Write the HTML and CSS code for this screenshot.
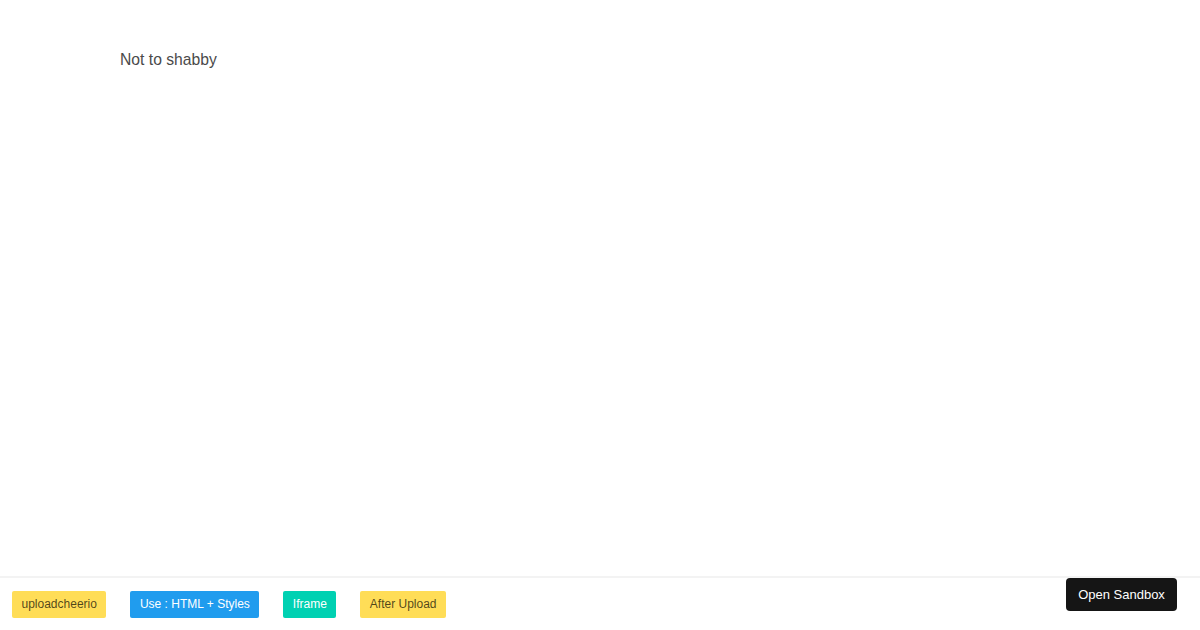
FILE: index.html
```html
<!DOCTYPE html>
<html>
<head>
<meta charset="utf-8">
<link rel="stylesheet" href="styles.css">
</head>
<body>
<main class="content">
  <p class="message">Not to shabby</p>
</main>
<footer class="footer">
  <div class="tags">
    <span class="tag tag-warning">uploadcheerio</span>
    <span class="tag tag-info">Use : HTML + Styles</span>
    <span class="tag tag-primary">Iframe</span>
    <span class="tag tag-warning">After Upload</span>
  </div>
</footer>
<a class="sandbox-btn">Open Sandbox</a>
</body>
</html>
```
FILE: styles.css
```css
html, body {
  margin: 0;
  padding: 0;
  height: 100%;
  background: #fff;
  font-family: "Liberation Sans", Arial, sans-serif;
}
body {
  display: flex;
  flex-direction: column;
}
.content {
  flex: 1;
  padding: 50px 120px 0;
}
.message {
  margin: 0;
  font-size: 15.7px;
  line-height: 20px;
  color: #4a4a4a;
}
.footer {
  height: 54px;
  border-top: 2px solid #f3f3f3;
  padding: 13px 12px 0;
  box-sizing: border-box;
}
.tags {
  display: flex;
  gap: 24px;
}
.tag {
  display: inline-flex;
  align-items: center;
  justify-content: center;
  height: 27px;
  padding: 0 9.5px 1px;
  font-size: 12px;
  border-radius: 2px;
  box-sizing: border-box;
}
.tag-warning { background: #ffdd57; color: rgba(0,0,0,0.7); }
.tag-info { background: #209cee; color: #fff; }
.tag-primary { background: #00d1b2; color: #fff; }
.sandbox-btn {
  position: absolute;
  right: 23px;
  bottom: 19px;
  width: 111px;
  height: 33px;
  display: flex;
  align-items: center;
  justify-content: center;
  background: #151515;
  color: #fff;
  font-size: 13px;
  border-radius: 4px;
  box-sizing: border-box;
}
```
